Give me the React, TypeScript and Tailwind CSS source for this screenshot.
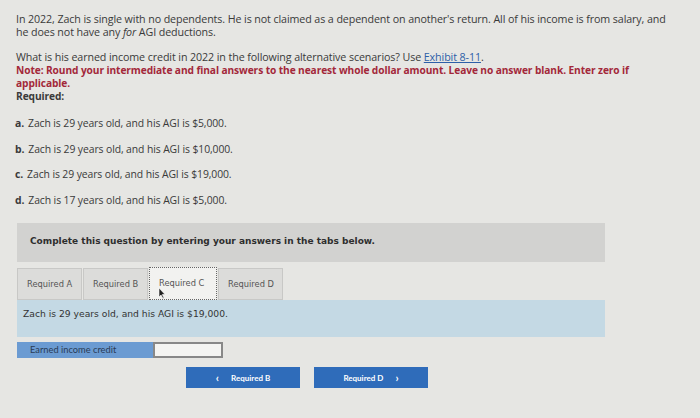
import React from "react";

export default function App() {
  const tabs = ["Required A", "Required B", "Required C", "Required D"];
  return (
    <div className="w-[700px] h-[418px] bg-[#e6e6e3] text-[#3a3a3a] overflow-hidden" style={{ fontFamily: "'Open Sans', Lato, sans-serif" }}>
      <div className="pl-[16px] pr-[26px] pt-[13px] text-[10.7px] leading-[13px] tracking-[-0.1px]">
        <p>
          In 2022, Zach is single with no dependents. He is not claimed as a dependent on another's return. All of his income is from salary, and he does not have any <i>for</i> AGI deductions.
        </p>
        <p className="mt-[11.5px]">
          What is his earned income credit in 2022 in the following alternative scenarios? Use <span className="text-[#2d5fa8] underline">Exhibit 8-11</span>.
        </p>
        <p className="text-[#a3283a] font-bold text-[10.2px]">
          Note: Round your intermediate and final answers to the nearest whole dollar amount. Leave no answer blank. Enter zero if applicable.
        </p>
        <p className="font-bold text-[10.2px]">Required:</p>
        <div className="mt-[13.5px] -ml-[1px] flex flex-col gap-[11.5px] text-[10.4px] leading-[14px]">
          <div><b className="mr-[4px]">a.</b>Zach is 29 years old, and his AGI is $5,000.</div>
          <div><b className="mr-[4px]">b.</b>Zach is 29 years old, and his AGI is $10,000.</div>
          <div><b className="mr-[4px]">c.</b>Zach is 29 years old, and his AGI is $19,000.</div>
          <div><b className="mr-[4px]">d.</b>Zach is 17 years old, and his AGI is $5,000.</div>
        </div>
      </div>

      <div className="ml-[17px] w-[588px] mt-[16.5px]" style={{ fontFamily: "'DejaVu Sans', Verdana, sans-serif" }}>
        <div className="bg-[#d2d2d0] h-[39px] pt-[12px] pl-[13px] text-[9px] leading-[12px] font-bold text-[#2e2e2e]">
          Complete this question by entering your answers in the tabs below.
        </div>
        <div className="flex mt-[5px] h-[33px] items-end">
          {tabs.map((t, i) => (
            <div
              key={t}
              className={
                i === 2
                  ? "h-[33px] w-[68px] pl-[9px] flex items-center text-[8.3px] text-[#555] bg-[#f2f2f0] border border-dotted border-[#666] relative mr-[1px]"
                  : "h-[32px] w-[65px] pl-[9px] flex items-center text-[8.3px] text-[#555] bg-[#dcdcda] border border-[#c8c8c6] mr-[1px]"
              }
            >
              {t}
              {i === 2 && (
                <svg className="absolute left-[8px] top-[20px]" width="8" height="11" viewBox="0 0 8 11">
                  <path d="M1 0 L1 9 L3 7 L5 10.5 L6 10 L4.3 6.5 L7 6.5 Z" fill="#222" stroke="#fff" strokeWidth="0.6" />
                </svg>
              )}
            </div>
          ))}
        </div>
        <div className="bg-[#c4d9e4] h-[37px] pl-[6px] pt-[7px] text-[9.2px] text-[#333]">
          Zach is 29 years old, and his AGI is $19,000.
        </div>
        <div className="flex mt-[5px] h-[16px]">
          <div className="w-[136px] bg-[#6b9bd2] text-[#2a3b55] text-[9.3px] flex items-center pl-[13px]" style={{ fontFamily: "Lato, sans-serif" }}>
            Earned income credit
          </div>
          <div className="w-[70px] h-[16px] bg-[#f4f4f2] border-2 border-[#888]" />
        </div>
        <div className="flex ml-[169px] mt-[9px] gap-[14px]" style={{ fontFamily: "Lato, sans-serif" }}>
          <div className="w-[114px] h-[21px] bg-[#2f6cba] text-white text-[8px] font-bold flex items-center justify-center gap-[12px]">
            <span className="text-[11px] leading-none">&lsaquo;</span>
            <span>Required B</span>
          </div>
          <div className="w-[114px] h-[21px] bg-[#2f6cba] text-white text-[8px] font-bold flex items-center justify-center gap-[12px]">
            <span>Required D</span>
            <span className="text-[11px] leading-none">&rsaquo;</span>
          </div>
        </div>
      </div>
    </div>
  );
}
